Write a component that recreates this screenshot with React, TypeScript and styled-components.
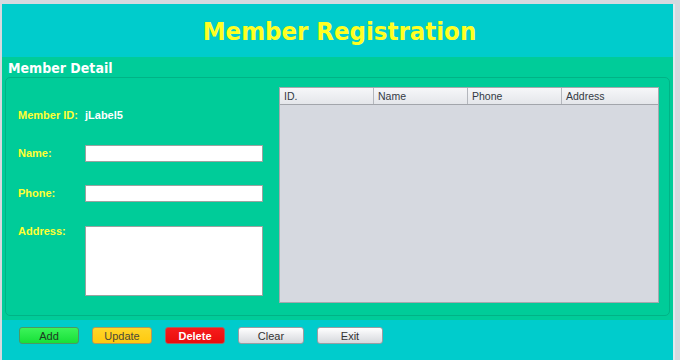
import React from 'react';
import styled, { createGlobalStyle } from 'styled-components';

const GlobalStyle = createGlobalStyle`
  html, body {
    margin: 0;
    padding: 0;
    background: #d6d9df;
    font-family: 'Liberation Sans', Arial, sans-serif;
  }
`;

type Tone = 'green' | 'yellow' | 'red' | 'gray';

const buttons: { label: string; tone: Tone; width: number }[] = [
  { label: 'Add', tone: 'green', width: 60 },
  { label: 'Update', tone: 'yellow', width: 60 },
  { label: 'Delete', tone: 'red', width: 60 },
  { label: 'Clear', tone: 'gray', width: 66 },
  { label: 'Exit', tone: 'gray', width: 66 },
];

const columns = ['ID.', 'Name', 'Phone', 'Address'];

export default function App() {
  return (
    <>
      <GlobalStyle />
      <Frame>
        <Window>
          <Header>
            <Title>Member Registration</Title>
          </Header>
          <DetailPanel>
            <PanelTitle>Member Detail</PanelTitle>
            <InnerBox>
              <Form>
                <FieldRow gapAbove={0}>
                  <Label>Member ID:</Label>
                  <Value>jLabel5</Value>
                </FieldRow>
                <FieldRow gapAbove={21}>
                  <Label>Name:</Label>
                  <TextBox />
                </FieldRow>
                <FieldRow gapAbove={23}>
                  <Label>Phone:</Label>
                  <TextBox />
                </FieldRow>
                <FieldRow gapAbove={24}>
                  <Label top>Address:</Label>
                  <TextArea />
                </FieldRow>
              </Form>
              <Table>
                <TableHead>
                  {columns.map((c) => (
                    <HeadCell key={c}>{c}</HeadCell>
                  ))}
                </TableHead>
              </Table>
            </InnerBox>
          </DetailPanel>
          <ButtonBar>
            {buttons.map((b) => (
              <ActionButton key={b.label} tone={b.tone} style={{ width: b.width }}>
                {b.label}
              </ActionButton>
            ))}
          </ButtonBar>
        </Window>
      </Frame>
    </>
  );
}

// Styled Components
const Frame = styled.div`
  width: 680px;
  height: 360px;
  padding: 4px 0 0 2px;
  box-sizing: border-box;
  overflow: hidden;
`;

const Window = styled.div`
  width: 671px;
  height: 356px;
  background: #00cccc;
  border-right: 2px solid #e6e8ec;
  display: flex;
  flex-direction: column;
`;

const Header = styled.div`
  height: 53px;
  display: flex;
  align-items: center;
  justify-content: center;
`;

const Title = styled.h1`
  margin: 0;
  color: #ffff22;
  font-family: 'Comic Sans MS', 'DejaVu Sans Condensed', 'DejaVu Sans', sans-serif;
  font-weight: bold;
  font-size: 25.5px;
  padding-left: 4px;
`;

const DetailPanel = styled.div`
  height: 263px;
  background: #00cc99;
  display: flex;
  flex-direction: column;
`;

const PanelTitle = styled.div`
  height: 20px;
  padding-left: 6px;
  color: #ffffff;
  font-family: 'Comic Sans MS', 'DejaVu Sans Condensed', 'DejaVu Sans', sans-serif;
  font-weight: bold;
  font-size: 14px;
  line-height: 22px;
`;

const InnerBox = styled.div`
  height: 239px;
  margin: 0 3px 0 3px;
  border: 1px solid #00b386;
  border-radius: 5px;
  box-sizing: border-box;
  display: flex;
  padding: 9px 0 0 12px;
`;

const Form = styled.div`
  width: 261px;
  padding-top: 20px;
  display: flex;
  flex-direction: column;
`;

const FieldRow = styled.div<{ gapAbove: number }>`
  display: grid;
  grid-template-columns: 67px 178px;
  align-items: start;
  min-height: 17px;
  margin-top: ${(p) => p.gapAbove}px;
`;

const Label = styled.span<{ top?: boolean }>`
  color: #ffff33;
  font-weight: bold;
  font-size: 11px;
  line-height: ${(p) => (p.top ? '11px' : '17px')};
`;

const Value = styled.span`
  color: #ffffff;
  font-size: 11px;
  font-weight: bold;
  line-height: 17px;
`;

const TextBox = styled.div`
  height: 17px;
  background: #ffffff;
  border: 1px solid #9aa3a0;
  box-sizing: border-box;
`;

const TextArea = styled(TextBox)`
  height: 70px;
`;

const Table = styled.div`
  width: 380px;
  height: 216px;
  background: #d6d9e0;
  border: 1px solid #a6a9ae;
  box-sizing: border-box;
`;

const TableHead = styled.div`
  display: grid;
  grid-template-columns: 94px 94px 94px 1fr;
  height: 16px;
  background: linear-gradient(#f6f7f9, #e4e6ea);
  border-bottom: 1px solid #a2a5ab;
`;

const HeadCell = styled.div`
  padding-left: 4px;
  font-size: 10.5px;
  line-height: 16px;
  color: #333a44;
  border-right: 1px solid #b4b7bd;
  &:last-child {
    border-right: none;
  }
`;

const toneStyles: Record<Tone, { bg: string; border: string; color: string }> = {
  green: { bg: 'linear-gradient(#3cf35a, #17e038)', border: '#4a9a62', color: '#1d3a22' },
  yellow: { bg: 'linear-gradient(#ffd52a, #ffc90e)', border: '#b09a5a', color: '#4a4a3a' },
  red: { bg: 'linear-gradient(#f61c1c, #ea0c0c)', border: '#a86060', color: '#ffffff' },
  gray: { bg: 'linear-gradient(#ffffff, #e6e7ea 60%, #d6d8dc)', border: '#9a9da3', color: '#333333' },
};

const ButtonBar = styled.div`
  display: flex;
  gap: 13px;
  padding: 7px 0 0 17px;
`;

const ActionButton = styled.button<{ tone: Tone }>`
  height: 17px;
  padding: 0;
  border-radius: 3px;
  border: 1px solid ${(p) => toneStyles[p.tone].border};
  background: ${(p) => toneStyles[p.tone].bg};
  color: ${(p) => toneStyles[p.tone].color};
  font-family: 'Liberation Sans', Arial, sans-serif;
  font-size: 11px;
  font-weight: ${(p) => (p.tone === 'red' ? 'bold' : 'normal')};
  box-sizing: border-box;
`;
